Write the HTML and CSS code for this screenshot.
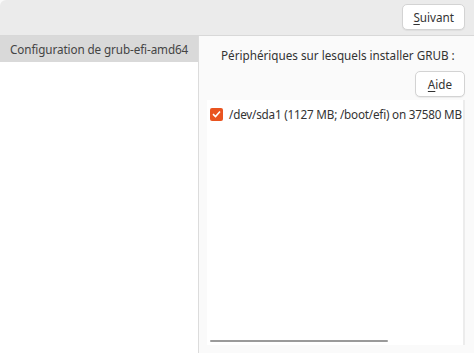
FILE: index.html
```html
<!DOCTYPE html>
<html lang="fr">
<head>
    <meta charset="UTF-8">
    <title>Configuration de grub-efi-amd64</title>
    <link rel="stylesheet" href="styles.css">
</head>
<body>
    <div class="header">
        <button class="button"><u>S</u>uivant</button>
    </div>
    <div class="main">
        <div class="sidebar">
            <div class="sidebar-item selected">Configuration de grub-efi-amd64</div>
        </div>
        <div class="content">
            <p class="label">Périphériques sur lesquels installer GRUB :</p>
            <div class="actions">
                <button class="button help"><u>A</u>ide</button>
            </div>
            <div class="list">
                <div class="list-row">
                    <span class="check">
                        <svg width="9" height="8" viewBox="0 0 9 8"><path d="M1 4.2 L3.5 6.5 L8 1.5" fill="none" stroke="#fff" stroke-width="1.6"/></svg>
                    </span>
                    <span class="row-text">/dev/sda1 (1127 MB; /boot/efi) on 37580 MB</span>
                </div>
                <div class="scrollbar"></div>
            </div>
        </div>
    </div>
</body>
</html>
```

FILE: styles.css
```css
body {
    margin: 0;
    font-family: 'Noto Sans', sans-serif;
    font-size: 11.7px;
    color: #333;
    background-color: #fafafa;
    height: 353px;
    overflow: hidden;
    display: flex;
    flex-direction: column;
}

.header {
    height: 36px;
    flex-shrink: 0;
    box-sizing: border-box;
    background-color: #ebebeb;
    border-bottom: 1px solid #d8d8d8;
    display: flex;
    justify-content: flex-end;
    align-items: center;
    padding: 0 9px 1px 0;
    border-top-left-radius: 6px;
}

.button {
    font-family: inherit;
    font-size: 11.7px;
    color: #333;
    background-color: #fff;
    border: 1px solid #d3d3d3;
    border-radius: 5px;
    height: 26px;
    padding: 0 10px;
    box-shadow: 0 1px 1px rgba(0, 0, 0, 0.06);
}

.button.help {
    min-width: 50px;
}

.button u {
    text-underline-offset: 2px;
}

.main {
    flex: 1;
    display: flex;
    min-height: 0;
}

.sidebar {
    width: 198px;
    flex-shrink: 0;
    background-color: #fff;
    border-right: 1px solid #dcdcdc;
}

.sidebar-item {
    height: 26px;
    line-height: 26px;
    padding-left: 10px;
    color: #444;
    white-space: nowrap;
    letter-spacing: -0.1px;
}

.sidebar-item.selected {
    background-color: #d9d9d9;
}

.content {
    flex: 1;
    min-width: 0;
    display: flex;
    flex-direction: column;
    padding: 0 9px 8px 8px;
}

.label {
    margin: 10px 0 0 14px;
    line-height: 18px;
    white-space: nowrap;
}

.actions {
    display: flex;
    justify-content: flex-end;
    margin-top: 7px;
}

.list {
    flex: 1;
    margin-top: 3px;
    background-color: #fff;
    border-right: 2px solid #ececec;
    display: flex;
    flex-direction: column;
    overflow: hidden;
}

.list-row {
    display: flex;
    align-items: center;
    gap: 6px;
    padding: 4px 0 0 3px;
    height: 20px;
}

.check {
    width: 13px;
    height: 13px;
    flex-shrink: 0;
    border-radius: 2px;
    background-color: #e95420;
    display: flex;
    align-items: center;
    justify-content: center;
}

.row-text {
    white-space: nowrap;
    letter-spacing: -0.2px;
}

.scrollbar {
    margin-top: auto;
    margin-left: 3px;
    margin-bottom: 3px;
    width: 178px;
    height: 2px;
    flex-shrink: 0;
    border-radius: 1px;
    background-color: #9a9a9a;
}
```
